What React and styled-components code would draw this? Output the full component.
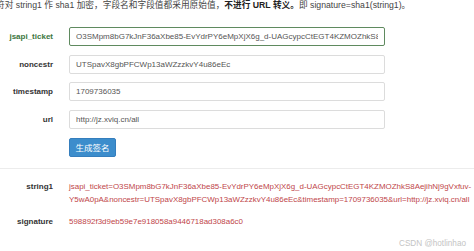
import React from 'react';
import styled, { createGlobalStyle } from 'styled-components';

const GlobalStyle = createGlobalStyle`
  html, body {
    margin: 0;
    padding: 0;
    overflow: hidden;
    background: #fff;
  }
  body {
    font-family: "Liberation Sans", Arial, "Noto Sans CJK SC", sans-serif;
    color: #333;
  }
`;

const Page = styled.div`
  position: relative;
  width: 474px;
  height: 251px;
  overflow: hidden;
`;

const Intro = styled.div`
  height: 10px;
  font-size: 8.7px;
  line-height: 10px;
  white-space: nowrap;
  text-indent: -4px;
  color: #444;
  b {
    color: #222;
  }
`;

const Form = styled.div`
  display: grid;
  grid-template-columns: 53px 316px;
  column-gap: 16px;
  row-gap: 8.7px;
  align-items: center;
  margin-top: 17px;
`;

const Label = styled.label`
  text-align: right;
  font-size: 8px;
  font-weight: bold;
  color: ${(p) => (p.$success ? '#3c763d' : '#333')};
  white-space: nowrap;
`;

const Field = styled.input`
  box-sizing: border-box;
  width: 100%;
  height: 19px;
  margin: 0;
  padding: 0 6px;
  border: 1px solid ${(p) => (p.$success ? '#5f8a5f' : '#dcdcdc')};
  border-radius: 2px;
  font-family: "Liberation Sans", Arial, sans-serif;
  font-size: 8px;
  color: #555;
  background: #fff;
  outline: none;
`;

const Button = styled.button`
  grid-column: 2;
  justify-self: start;
  width: 47px;
  height: 19px;
  padding: 0;
  border: 1px solid #357ebd;
  border-radius: 2px;
  background: #3c8dcc;
  color: #fff;
  font-family: "Noto Sans CJK SC", sans-serif;
  font-size: 8.5px;
  cursor: pointer;
`;

const Divider = styled.div`
  margin-top: 11px;
  border-top: 1px solid #ececec;
`;

const Result = styled.div`
  display: grid;
  grid-template-columns: 53px 1fr;
  column-gap: 16px;
  row-gap: 9px;
  margin-top: 11px;
`;

const ResultLabel = styled.div`
  text-align: right;
  font-size: 8px;
  font-weight: bold;
  line-height: 13px;
  color: #333;
`;

const Value = styled.div`
  font-size: 7.95px;
  line-height: 13px;
  color: #c0464a;
  white-space: nowrap;
`;

const Watermark = styled.div`
  position: absolute;
  right: 8px;
  bottom: 3px;
  font-size: 8.2px;
  color: #c4c4c4;
`;

const fields = [
  { name: 'jsapi_ticket', value: 'O3SMpm8bG7kJnF36aXbe85-EvYdrPY6eMpXjX6g_d-UAGcypcCtEGT4KZMOZhkS8AejihNj9gVxfuv-Y5wA0pA', success: true },
  { name: 'noncestr', value: 'UTSpavX8gbPFCWp13aWZzzkvY4u86eEc' },
  { name: 'timestamp', value: '1709736035' },
  { name: 'url', value: 'http://jz.xviq.cn/all' },
];

export default function App() {
  return (
    <Page>
      <GlobalStyle />
      <Intro>
        符对 string1 作 sha1 加密，字段名和字段值都采用原始值，<b>不进行 URL 转义。</b>即 signature=sha1(string1)。
      </Intro>
      <Form>
        {fields.map((f) => (
          <React.Fragment key={f.name}>
            <Label $success={f.success}>{f.name}</Label>
            <Field $success={f.success} readOnly value={f.value} />
          </React.Fragment>
        ))}
        <Button type="button">生成签名</Button>
      </Form>
      <Divider />
      <Result>
        <ResultLabel>string1</ResultLabel>
        <Value>
          jsapi_ticket=O3SMpm8bG7kJnF36aXbe85-EvYdrPY6eMpXjX6g_d-UAGcypcCtEGT4KZMOZhkS8AejihNj9gVxfuv-
          <br />
          Y5wA0pA&amp;noncestr=UTSpavX8gbPFCWp13aWZzzkvY4u86eEc&amp;timestamp=1709736035&amp;url=http://jz.xviq.cn/all
        </Value>
        <ResultLabel>signature</ResultLabel>
        <Value>598892f3d9eb59e7e918058a9446718ad308a6c0</Value>
      </Result>
      <Watermark>CSDN @hotlinhao</Watermark>
    </Page>
  );
}
